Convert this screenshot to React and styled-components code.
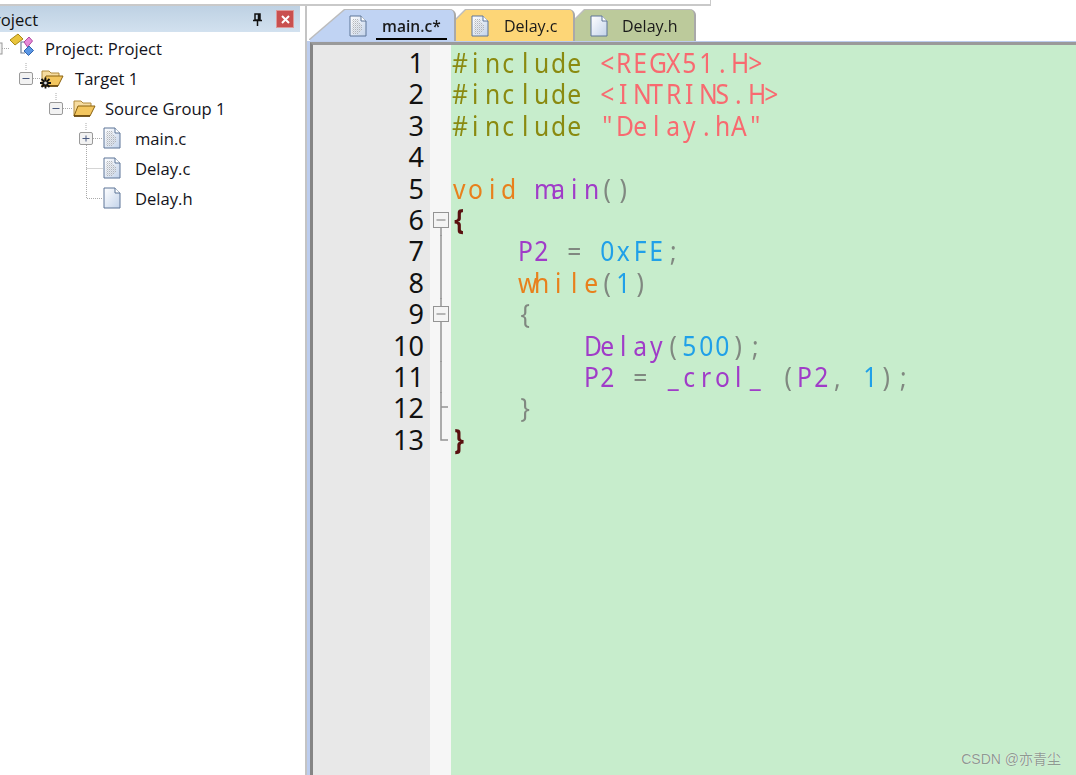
import React from 'react';
import styled, { createGlobalStyle } from 'styled-components';

const GlobalStyle = createGlobalStyle`
  html, body { margin: 0; padding: 0; background: #fff; overflow: hidden; }
`;

const Page = styled.div`
  width: 1076px;
  height: 775px;
  display: flex;
  flex-direction: column;
  overflow: hidden;
  background: #fff;
`;

const TopStrip = styled.div`
  height: 4px;
  width: 710px;
  flex: none;
  border-bottom: 2px solid #c9c9c9;
  border-right: 1px solid #c9c9c9;
`;

const Main = styled.div`
  flex: 1;
  display: flex;
  min-height: 0;
`;

const ProjectPanel = styled.div`
  width: 305px;
  flex: none;
  padding-right: 5px;
  box-sizing: border-box;
  overflow: hidden;
`;

const PanelHeader = styled.div`
  height: 26px;
  display: flex;
  align-items: center;
  justify-content: space-between;
  padding-right: 6px;
  background: linear-gradient(#bed1e3, #d2e1ef);
`;

const PanelTitle = styled.span`
  margin-left: -16px;
  font: 16.6px "Open Sans", sans-serif;
  color: #111;
`;

const HeaderButtons = styled.div`
  display: flex;
  align-items: center;
  gap: 13px;
`;

const CloseButton = styled.div`
  width: 18px;
  height: 18px;
  display: flex;
  align-items: center;
  justify-content: center;
  background: #c9504f;
  border: 1px solid #d99;
  box-sizing: border-box;
`;

const Tree = styled.div`
  padding-top: 1px;
`;

const TreeRow = styled.div`
  height: 30px;
  display: flex;
  align-items: center;
  padding-left: ${props => props.$indent}px;
`;

const Connector = styled.svg`
  width: ${props => props.width}px;
  height: 30px;
  flex: none;
`;

const TreeLabel = styled.span`
  margin-left: ${props => props.$gap}px;
  font: 16.6px "Open Sans", sans-serif;
  color: #141420;
  white-space: nowrap;
`;

const Splitter = styled.div`
  width: 2px;
  flex: none;
  background: #c4c4c4;
`;

const EditorPane = styled.div`
  flex: 1;
  min-width: 0;
  display: flex;
  flex-direction: column;
`;

const TabBar = styled.div`
  height: 32px;
  flex: none;
  margin-top: 3px;
  display: flex;
  align-items: flex-end;
  padding-left: 3px;
  filter: drop-shadow(-1px -1px 0 #bcbcbc);
`;

const Tab = styled.div`
  height: 31px;
  box-sizing: border-box;
  width: ${props => props.$width}px;
  padding-left: ${props => props.$pad}px;
  display: flex;
  align-items: center;
  background: ${props => props.$color};
  border-right: 2px solid #a9a9a9;
  border-radius: 0 5px 0 0;
  clip-path: polygon(${props => props.$slant}px 0, 100% 0, 100% 100%, 0 100%, 0 ${props => props.$notch}px);
`;

const TabLabel = styled.span`
  margin-left: ${props => props.$gap}px;
  font: ${props => (props.$active ? '600 15.6px' : '400 16px')} "Open Sans", sans-serif;
  color: #1a1a1a;
  white-space: nowrap;
  ${props => props.$active && `
    border-bottom: 2px solid #000;
    padding: 0 6px;
    margin-top: 2px;
    line-height: 24px;
  `}
`;

const EditorShell = styled.div`
  flex: 1;
  min-height: 0;
  display: flex;
  padding: 1px 0 0 3px;
  background: #bccdee;
`;

const EditorFrame = styled.div`
  flex: 1;
  min-width: 0;
  border-top: 3px solid #9a9a9a;
  border-left: 3px solid #858585;
  position: relative;
  background: linear-gradient(90deg, #e8e8e8 117px, #f6f6f6 117px, #f6f6f6 138px, #c7edcc 138px);
`;

const Lines = styled.div`
  padding-top: 2px;
`;

const Line = styled.div`
  height: 31.42px;
  display: grid;
  grid-template-columns: 117px 21px 1fr;
  align-items: stretch;
`;

const LineNo = styled.div`
  text-align: right;
  padding-right: 6px;
  font: 27px/31.42px "Noto Sans", sans-serif;
  color: #111;
`;

const Code = styled.div`
  font: 28px/31.42px "Noto Sans", sans-serif;
  white-space: pre;
`;

const Char = styled.span`
  display: inline-block;
  width: 16.45px;
  text-align: center;
  white-space: pre;
  transform: scaleX(0.88);
  color: ${props => props.$c};
  font-weight: ${props => (props.$bold ? 700 : 400)};
`;

const FoldCell = styled.svg`
  width: 21px;
  height: 32px;
  display: block;
`;

const Watermark = styled.div`
  position: absolute;
  right: 15px;
  bottom: 7px;
  font: 14px "Liberation Sans", "Noto Sans CJK SC", sans-serif;
  color: #8d9a90;
  text-shadow: 0 0 1px #fff;
`;

const PP = '#8a8a10';
const STR = '#f86a70';
const KW = '#e8801c';
const ID = '#a03cc8';
const NUM = '#20a0e8';
const OP = '#808880';
const BR = '#5a1010';

const t = (s, c, bold) => ({ s, c, bold });

const code = [
  [t('#include ', PP), t('<REGX51.H>', STR)],
  [t('#include ', PP), t('<INTRINS.H>', STR)],
  [t('#include ', PP), t('"Delay.hA"', STR)],
  [],
  [t('void ', KW), t('main', ID), t('()', OP)],
  [t('{', BR, true)],
  [t('    '), t('P2', ID), t(' = ', OP), t('0xFE', NUM), t(';', OP)],
  [t('    '), t('while', KW), t('(', OP), t('1', NUM), t(')', OP)],
  [t('    '), t('{', OP)],
  [t('        '), t('Delay', ID), t('(', OP), t('500', NUM), t(');', OP)],
  [t('        '), t('P2', ID), t(' = ', OP), t('_crol_', ID), t(' (', OP), t('P2', ID), t(', ', OP), t('1', NUM), t(');', OP)],
  [t('    '), t('}', OP)],
  [t('}', BR, true)],
];

// fold gutter marker for each source line
const folds = [null, null, null, null, null, 'box-first', 'line', 'line', 'box', 'line', 'line', 'tick', 'end'];

function Fold({ kind }) {
  if (!kind) return <FoldCell />;
  const stroke = '#949494';
  return (
    <FoldCell viewBox="0 0 21 32">
      {kind === 'line' && <path d="M11 0V32" stroke={stroke} strokeWidth="1.5" />}
      {kind === 'tick' && <path d="M11 0V32M11 15H18" stroke={stroke} strokeWidth="1.5" />}
      {kind === 'end' && <path d="M11 0V16H18" stroke={stroke} strokeWidth="1.5" fill="none" />}
      {kind === 'box-first' && <path d="M11 16V32" stroke={stroke} strokeWidth="1.5" />}
      {kind === 'box' && <path d="M11 0V32" stroke={stroke} strokeWidth="1.5" />}
      {(kind === 'box' || kind === 'box-first') && (
        <>
          <rect x="3.5" y="8.5" width="15" height="15" fill="#f4f4f4" stroke={stroke} />
          <path d="M6.5 16H15.5" stroke="#777" />
        </>
      )}
    </FoldCell>
  );
}

function PageIcon({ dotted }) {
  return (
    <svg width="18" height="22" viewBox="0 0 18 22">
      <defs>
        <linearGradient id="pg" x1="0" y1="0" x2="1" y2="1">
          <stop offset="0" stopColor="#ffffff" />
          <stop offset="1" stopColor="#c3d3ea" />
        </linearGradient>
        <pattern id="dots" width="2" height="2" patternUnits="userSpaceOnUse">
          <rect width="1" height="1" fill="#a8a8a8" />
          <rect x="1" y="1" width="1" height="1" fill="#cfcfcf" />
        </pattern>
      </defs>
      <path d="M1 1H12L17 6V21H1Z" fill="url(#pg)" stroke="#5c7497" />
      <path d="M12 1V6H17" fill="#fff" stroke="#5c7497" />
      {dotted && <path d="M3 4H10V7L13 10V15L9 19H3Z" fill="url(#dots)" opacity=".8" />}
    </svg>
  );
}

function FolderIcon({ gear }) {
  return (
    <svg width="24" height="22" viewBox="0 0 24 22" style={{ overflow: 'visible' }}>
      <path d="M2 19V4H9L11 6H19V10" fill="#f6dca0" stroke="#b08a3c" />
      <path d="M2 19L6 9H23L18 19Z" fill="#f3c65f" stroke="#8a6210" />
      <path d="M2 19H18" stroke="#5c3c04" strokeWidth="1.5" />
      {gear && (
        <g stroke="#111" strokeWidth="1.8">
          <path d="M0 16H11M5.5 10.5V21.5M1.5 12L9.5 20M9.5 12L1.5 20" />
          <circle cx="5.5" cy="16" r="1.8" fill="#ddd" strokeWidth=".6" />
        </g>
      )}
    </svg>
  );
}

function ProjectIcon() {
  return (
    <svg width="24" height="24" viewBox="0 0 24 24" style={{ overflow: 'visible' }}>
      <path d="M11 9V17H15M11 9V6H16" fill="none" stroke="#6f7f95" strokeWidth="1.2" />
      <path d="M0 4L8 -2L13 3L5 9Z" fill="#e9c43c" stroke="#a88916" />
      <path d="M14 6L19 1L22.5 5L17.5 11Z" fill="#e88ad8" stroke="#b04aa0" />
      <path d="M14 15L19 10L23.5 14.5L18.5 19.5Z" fill="#5a96e4" stroke="#2f64ae" />
    </svg>
  );
}

const treeRows = [
  { indent: 0, width: 10, link: 'root', icon: <ProjectIcon />, label: 'Project: Project', gap: 11 },
  { indent: 19, width: 21, link: 'box', icon: <FolderIcon gear />, label: 'Target 1', gap: 11 },
  { indent: 49, width: 23, link: 'box', icon: <FolderIcon />, label: 'Source Group 1', gap: 9 },
  { indent: 79, width: 24, link: 'plus', icon: <PageIcon dotted />, label: 'main.c', gap: 14 },
  { indent: 79, width: 24, link: 'mid', icon: <PageIcon dotted />, label: 'Delay.c', gap: 14 },
  { indent: 79, width: 24, link: 'last', icon: <PageIcon />, label: 'Delay.h', gap: 14 },
];

function Link({ kind, width }) {
  const dots = { stroke: '#aaa', strokeDasharray: '1 1', fill: 'none' };
  if (kind === 'box' || kind === 'plus') {
    return (
      <Connector width={width} viewBox={`0 0 ${width} 30`}>
        <path d={`M7 0V8M14 15.5H${width}`} {...dots} />
        {kind === 'plus' && <path d="M7.5 22V30" {...dots} />}
        <rect x=".5" y="9.5" width="13" height="12" rx="1.5" fill="#f2f2f2" stroke="#9a9a9a" />
        <path d="M3.5 15.5H10.5" stroke="#4a5a80" />
        {kind === 'plus' && <path d="M7 12.5V18.5" stroke="#4a5a80" />}
      </Connector>
    );
  }
  if (kind === 'mid') {
    return (
      <Connector width={width} viewBox={`0 0 ${width} 30`}>
        <path d={`M7.5 0V30M7.5 15.5H${width}`} {...dots} />
      </Connector>
    );
  }
  if (kind === 'last') {
    return (
      <Connector width={width} viewBox={`0 0 ${width} 30`}>
        <path d={`M7.5 0V15.5H${width}`} {...dots} />
      </Connector>
    );
  }
  return (
    <Connector width={width} viewBox={`0 0 ${width} 30`}>
      <rect x="-6" y="10" width="8" height="11" fill="#f2f2f2" stroke="#9a9a9a" />
      <path d={`M2 15.5H${width}`} {...dots} />
    </Connector>
  );
}

const tabs = [
  { label: 'main.c*', color: '#c0d3f3', width: 146, pad: 39, gap: 9, active: true, slant: 35, notch: 30, dotted: true },
  { label: 'Delay.c', color: '#fdd677', width: 119, pad: 15, gap: 15, slant: 10, notch: 10, dotted: true },
  { label: 'Delay.h', color: '#bcca9b', width: 121, pad: 15, gap: 14, slant: 10, notch: 10 },
];

export default function App() {
  return (
    <Page>
      <GlobalStyle />
      <TopStrip />
      <Main>
        <ProjectPanel>
          <PanelHeader>
            <PanelTitle>Project</PanelTitle>
            <HeaderButtons>
              <svg width="11" height="13" viewBox="0 0 11 13">
                <path d="M3 1H8V7H3ZM1 7.5H10M5.5 8V13M6.5 1V7" fill="none" stroke="#111" strokeWidth="1.5" />
              </svg>
              <CloseButton>
                <svg width="9" height="9" viewBox="0 0 9 9">
                  <path d="M1 1L8 8M8 1L1 8" stroke="#fff" strokeWidth="2" />
                </svg>
              </CloseButton>
            </HeaderButtons>
          </PanelHeader>
          <Tree>
            {treeRows.map(row => (
              <TreeRow key={row.label} $indent={row.indent}>
                <Link kind={row.link} width={row.width} />
                {row.icon}
                <TreeLabel $gap={row.gap}>{row.label}</TreeLabel>
              </TreeRow>
            ))}
          </Tree>
        </ProjectPanel>
        <Splitter />
        <EditorPane>
          <TabBar>
            {tabs.map(tab => (
              <Tab key={tab.label} $color={tab.color} $width={tab.width} $pad={tab.pad} $slant={tab.slant} $notch={tab.notch}>
                <PageIcon dotted={tab.dotted} />
                <TabLabel $gap={tab.gap} $active={tab.active}>{tab.label}</TabLabel>
              </Tab>
            ))}
          </TabBar>
          <EditorShell>
            <EditorFrame>
              <Lines>
                {code.map((tokens, i) => (
                  <Line key={i}>
                    <LineNo>{i + 1}</LineNo>
                    <Fold kind={folds[i]} />
                    <Code>
                      {tokens.flatMap((tok, j) =>
                        tok.s.split('').map((ch, k) => (
                          <Char key={`${j}-${k}`} $c={tok.c} $bold={tok.bold}>{ch}</Char>
                        ))
                      )}
                    </Code>
                  </Line>
                ))}
              </Lines>
              <Watermark>CSDN @亦青尘</Watermark>
            </EditorFrame>
          </EditorShell>
        </EditorPane>
      </Main>
    </Page>
  );
}
